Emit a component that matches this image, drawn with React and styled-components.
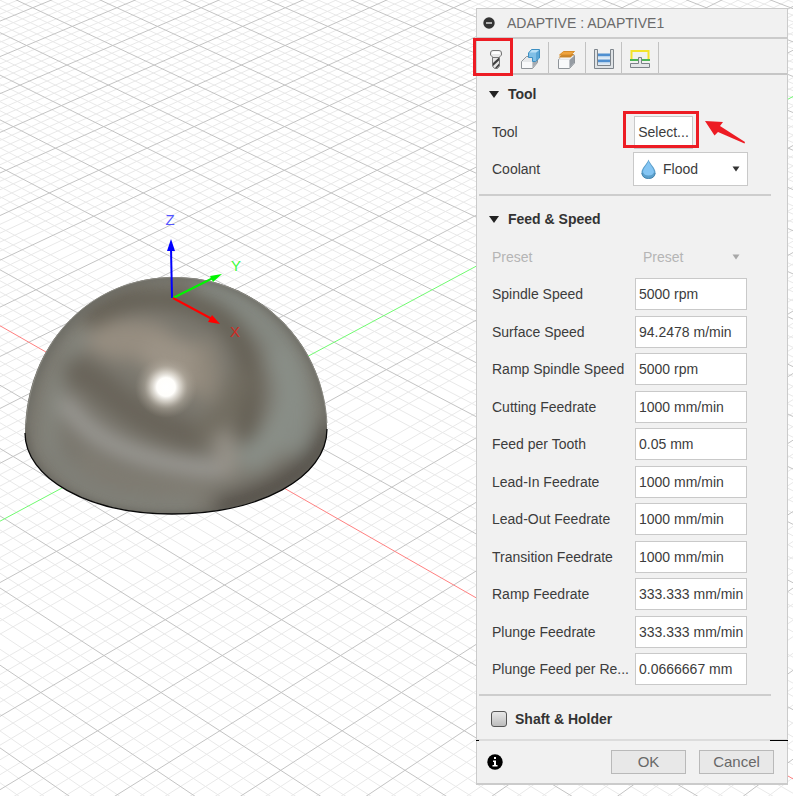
import React, { useState } from "react";
import styled, { createGlobalStyle, css } from "styled-components";

const GlobalStyle = createGlobalStyle`
  * { box-sizing: border-box; }
  body {
    margin: 0;
    background: #fff;
    color: #3c3c3c;
    font-family: "Liberation Sans", Arial, sans-serif;
    font-size: 14px;
  }
  button, input, select { font: inherit; color: inherit; }
`;

const Workspace = styled.main`
  display: grid;
  grid-template-columns: minmax(0, 1fr);
  min-height: 100vh;
  overflow: hidden;
`;

const Viewport = styled.section`
  grid-area: 1 / 1;
  display: grid;
  height: 0;
  min-height: 100%;
  overflow: hidden;
`;

const SceneSvg = styled.svg`
  display: block;
  width: 100%;
  height: 100%;
`;

const Panel = styled.form`
  grid-area: 1 / 1;
  justify-self: end;
  align-self: start;
  z-index: 1;
  width: 312px;
  margin: 8px 5px 11px 0;
  background: #f1f1f1;
  border: solid #cbcbcb;
  border-width: 1px 1px 2px 1px;
`;

const TitleBar = styled.header`
  display: flex;
  align-items: center;
  gap: 12px;
  height: 30px;
  padding: 0 6px;
  border-bottom: 2px solid #cbcbcb;
`;

const CollapseButton = styled.button`
  display: flex;
  padding: 0;
  border: 0;
  background: none;
`;

const Title = styled.h1`
  margin: 0;
  font-size: 14px;
  font-weight: 400;
  color: #6a6a6a;
`;

const TabBar = styled.div`
  display: flex;
  height: 36px;
  padding-top: 3px;
  border-bottom: 2px solid #c6c6c6;
`;

const annotated = css`
  position: relative;
  &::after {
    content: "";
    position: absolute;
    inset: ${(p) => p.$inset};
    border: 3px solid #ed1c24;
    pointer-events: none;
  }
`;

const Tab = styled.button`
  display: flex;
  align-items: center;
  justify-content: center;
  flex: 0 0 ${(p) => (p.$marked ? 36 : 37)}px;
  padding: ${(p) => (p.$marked ? "3px 0 0 2px" : "3px 0 0")};
  border: 0;
  border-right: 1px solid #c2c2c2;
  background: #f1f1f1;
  &:nth-child(even) { flex-basis: 36px; }
  ${(p) => p.$marked && annotated}
`;

const Group = styled.section`
  padding: ${(p) => (p.$first ? 0 : 4)}px 0 ${(p) => (p.$flush ? 0 : 6)}px;
`;

const Divider = styled.hr`
  height: 2px;
  margin: 0 16px 0 2px;
  border: 0;
  background: #cdcdcd;
`;

const GroupTitle = styled.h2`
  display: flex;
  align-items: center;
  gap: 9px;
  height: 38px;
  margin: 0;
  padding-left: 12px;
  font-size: 14px;
  font-weight: 700;
  color: #333;
`;

const Rows = styled.div`
  display: grid;
`;

const Row = styled.div`
  display: grid;
  grid-template-columns: 140px 1fr;
  align-items: center;
  height: 38px;
  padding-left: 15px;
  &:nth-child(even) {
    height: 37px;
    padding-bottom: 1px;
  }
`;

const Label = styled.label`
  white-space: nowrap;
  line-height: 18px;
  color: ${(p) => (p.$muted ? "#b5b5b5" : "#3c3c3c")};
`;

const Control = styled.div`
  display: flex;
  align-items: center;
  padding-left: ${(p) => (p.$wide ? 1 : 3)}px;
`;

const Field = styled.input`
  width: 112px;
  height: 32px;
  padding: 0 3px;
  border: 1px solid #c9c9c9;
  border-radius: 0;
  background: #fff;
  outline: none;
`;

const PickButton = styled.button`
  width: 59px;
  height: 33px;
  margin-left: -1px;
  padding: 0;
  border: 1px solid #c9c9c9;
  background: #fff;
  white-space: nowrap;
  ${annotated}
`;

const Pointer = styled.svg`
  margin-left: 11px;
`;

const SelectBox = styled.div`
  position: relative;
  display: flex;
  align-items: center;
  width: 115px;
  height: 34px;
`;

const SelectInput = styled.select`
  appearance: none;
  width: 100%;
  height: 100%;
  padding: 0 24px 0 ${(p) => (p.$plain ? 9 : 29)}px;
  border: 1px solid ${(p) => (p.$plain ? "transparent" : "#c9c9c9")};
  border-radius: 0;
  background: ${(p) => (p.$plain ? "transparent" : "#fff")};
  outline: none;
  &:disabled { color: #b5b5b5; opacity: 1; }
`;

const DropIcon = styled.svg`
  position: absolute;
  left: 8px;
  pointer-events: none;
`;

const Caret = styled.svg`
  position: absolute;
  right: 8px;
  fill: ${(p) => (p.$muted ? "#a8a8a8" : "#333")};
  pointer-events: none;
`;

const CheckLine = styled.div`
  display: flex;
  align-items: center;
  gap: 8px;
  height: 38px;
  padding-left: 14px;
  font-weight: 700;
  color: #333;
`;

const Checkbox = styled.input`
  appearance: none;
  width: 16px;
  height: 16px;
  margin: 0;
  border: 1px solid #555;
  border-radius: 3px;
  background: linear-gradient(#e8e8e8, #bcbcbc);
  &:checked { background: #666; }
`;

const FooterRule = styled.hr`
  height: 3px;
  margin: 0 -1px;
  border: 0;
  background:
    linear-gradient(#000, #000) left bottom / 3px 1px no-repeat,
    linear-gradient(#000, #000) right bottom / 18px 1px no-repeat,
    linear-gradient(transparent 1px, #dcdcdc 1px);
`;

const Footer = styled.footer`
  display: flex;
  align-items: center;
  gap: 13px;
  height: 42px;
  padding: 0 13px 0 10px;
`;

const InfoButton = styled.button`
  display: flex;
  margin-right: auto;
  padding: 0;
  border: 0;
  background: none;
`;

const ActionButton = styled.button`
  width: 75px;
  height: 24px;
  padding: 0;
  border: 1px solid #b9b9b9;
  background: #e8e8e8;
  font-size: 15px;
  line-height: 22px;
  color: #686868;
`;

/* Perspective ground plane: i and j are the cell coordinates of the two line families. */
const project = (i, j) => {
  const depth = 1 / (6.2473e-4 - 7.1996e-6 * (i + j));
  const y = depth - 1593;
  return [285.3 - 0.006 * (y - 7.7) + ((i - j) / 2) * 0.0526 * depth, y];
};

const gridPath = (accept) => {
  const parts = [];
  for (let k = -100; k <= 160; k += 1) {
    if (!accept(k)) continue;
    const c = k / 5;
    const lo = Math.max(-24, -8 - c);
    const hi = Math.min(36, 34 - c);
    if (hi <= lo) continue;
    const ends = [
      [project(c, lo), project(c, hi)],
      [project(lo, c), project(hi, c)],
    ];
    ends.forEach(([a, b]) => {
      parts.push(
        `M${a.map((v) => v.toFixed(1)).join(" ")}L${b.map((v) => v.toFixed(1)).join(" ")}`
      );
    });
  }
  return parts.join("");
};

const MINOR = gridPath((k) => k % 5 !== 0);
const MAJOR = gridPath((k) => k % 5 === 0 && k !== 40 && k !== 50);
const axisPath = (a, b) => `M${a.join(" ")}L${b.join(" ")}`;
const RED_AXIS = axisPath(project(-14, 10), project(22, 10));
const GREEN_AXIS = axisPath(project(8, -14), project(8, 22));

const DOME = "M25 433C25 345 90 277 174 277C262 277 327 347 327 429C327 478 259 514 172 514C88 514 25 478 25 433Z";

function Scene() {
  return (
    <SceneSvg viewBox="0 0 793 796" preserveAspectRatio="xMinYMin slice" role="img" aria-label="Model">
      <defs>
        <clipPath id="dome"><path d={DOME} /></clipPath>
        <filter id="soft" x="-50%" y="-50%" width="200%" height="200%" colorInterpolationFilters="sRGB">
          <feGaussianBlur stdDeviation="9" />
        </filter>
        <filter id="fine" x="-50%" y="-50%" width="200%" height="200%" colorInterpolationFilters="sRGB">
          <feGaussianBlur stdDeviation="4" />
        </filter>
        <radialGradient id="glint">
          <stop offset="0" stopColor="#fff" />
          <stop offset=".3" stopColor="#fffefb" />
          <stop offset=".5" stopColor="#e2ddd4" stopOpacity=".75" />
          <stop offset=".7" stopColor="#b9b2a6" stopOpacity=".45" />
          <stop offset="1" stopColor="#a39b8e" stopOpacity="0" />
        </radialGradient>
      </defs>
      <g fill="none">
        <path d={MINOR} stroke="#e9e9e9" />
        <path d={MAJOR} stroke="#c4c4c4" />
        <path d={RED_AXIS} stroke="#ff8080" />
        <path d={GREEN_AXIS} stroke="#70fa70" />
      </g>
      <g clipPath="url(#dome)">
        <path d={DOME} fill="#7b786f" />
        <g filter="url(#soft)" fill="none" strokeLinecap="round">
          <path d="M50 450C42 380 80 305 165 286" stroke="#868880" strokeWidth="14" />
          <path d="M205 286C270 308 312 375 298 445" stroke="#858982" strokeWidth="28" />
          <path d="M282 360C300 400 284 436 252 456" stroke="#898e87" strokeWidth="30" />
          <path d="M92 318C125 292 185 288 226 322C254 352 256 394 245 432" stroke="#645f54" strokeWidth="20" />
          <ellipse cx="130" cy="340" rx="44" ry="20" fill="#968d80" />
          <ellipse cx="180" cy="364" rx="42" ry="24" transform="rotate(22 180 364)" fill="#9c9386" />
          <path d="M205 350L208 392" stroke="#8f877a" strokeWidth="20" />
          <path d="M78 372C104 380 122 418 192 436" stroke="#69645a" strokeWidth="30" />
          <path d="M205 430C222 418 234 404 240 380" stroke="#726d61" strokeWidth="22" />
          <path d="M66 404C90 440 135 464 228 470" stroke="#a09f9b" strokeWidth="14" />
          <path d="M224 440L228 468" stroke="#98938a" strokeWidth="18" />
          <path d="M84 458C110 486 165 488 205 488" stroke="#827e74" strokeWidth="12" />
          <path d="M52 452C78 496 130 512 190 504" stroke="#83857e" strokeWidth="12" />
          <path d="M225 508C270 496 315 472 332 432" stroke="#544f48" strokeWidth="22" />
        </g>
        <g filter="url(#fine)" fill="none">
          <path d="M22 450C20 350 90 274 174 274C262 274 331 347 331 435" stroke="#6d6d66" strokeWidth="9" />
          <path d="M23 430C23 480 80 518 172 518C262 518 331 480 331 430" stroke="#605f58" strokeWidth="8" />
        </g>
      </g>
      <path d="M26 423C32 339 92 277.500 174 277.500C256 277.500 322 340 327 423" fill="none" stroke="#8a8982" />
      <path d="M25 433C25 478 88 514 172 514C259 514 327 478 327 429" fill="none" stroke="#080808" strokeWidth="1.300" />
      <circle cx="166" cy="387" r="31" fill="url(#glint)" />
      <g strokeWidth="2" fill="none">
        <path d="M172 298L171 248" stroke="#0000ff" />
        <path d="M173 298L213 278" stroke="#00f500" />
        <path d="M173 298L212 319" stroke="#ff0000" />
      </g>
      <path d="M171 239L175 251H167Z" fill="#0000ff" />
      <path d="M222 274L213 282L210 276Z" fill="#00f500" />
      <path d="M220 324L208 322L212 315Z" fill="#ff0000" />
      <g fontSize="15" textAnchor="middle">
        <text x="170" y="225" fill="#5555ff">Z</text>
        <text x="236" y="271" fill="#3dfa3d">Y</text>
        <text x="235" y="337" fill="#cf2c24">X</text>
      </g>
    </SceneSvg>
  );
}

const ToolIcon = () => (
  <svg width="22" height="22" viewBox="0 0 22 22">
    <path d="M7.500 8.500H14.500V18L12.500 20.500H9.500L7.500 18Z" fill="#e4e4e4" stroke="#777" />
    <path d="M8 15L14 9.500V12.500L8 18ZM10 20L14 15.500V18L12 20Z" fill="#3f3f3f" />
    <path d="M5.500 5Q5.500 2.500 8 2.500H14Q16.500 2.500 16.500 5V7L14 9.500H8L5.500 7Z" fill="#e9e9e9" stroke="#777" />
    <path d="M7 4.500Q7 3.500 9 3.500H13Q15 3.500 15 4.500V6H7Z" fill="#fff" />
  </svg>
);

const GeometryIcon = () => (
  <svg width="22" height="22" viewBox="0 0 22 22">
    <path d="M1.500 13.500L6.500 8.500H17.500V14.500L12.500 20.500H1.500Z" fill="#e6e8ea" stroke="#8f9499" />
    <path d="M2 14H12V20H2Z" fill="#f8f9fa" />
    <path d="M12.500 14L17 9V14.500L12.500 20Z" fill="#a5abb1" />
    <path d="M8.500 5L11.500 1.500H19.500V10L15.500 13.500H12.500V9.500H8.500Z" fill="#80bfe6" stroke="#3c8fc2" />
    <path d="M9.500 4.500L12 2H19L16 4.500Z" fill="#b9e0f6" />
    <path d="M16 5L19 2.500V9.500L16 12.500Z" fill="#5aa6d6" />
  </svg>
);

const HeightsIcon = () => (
  <svg width="22" height="22" viewBox="0 0 22 22">
    <path d="M2.500 11.500L7 7.500H18.500V15L13.500 20.500H2.500Z" fill="#e6e8ea" stroke="#8f9499" />
    <path d="M3 12H13V20H3Z" fill="#f8f9fa" />
    <path d="M13.500 12L18 8V15L13.500 20Z" fill="#969ca3" />
    <path d="M3 10.500L7 6.500H18.500L14 10.500Z" fill="#fff" />
    <path d="M2.500 9.500L6.500 6H18.500L14.500 9.500Z" fill="#c98428" />
    <path d="M3.500 7L7.500 3.500H18.500L14.500 7Z" fill="#f0a43e" stroke="#d88d2a" />
  </svg>
);

const PassesIcon = () => (
  <svg width="22" height="22" viewBox="0 0 22 22">
    <path d="M5 7H17M5 13H17" stroke="#4f8fd0" strokeWidth="3" />
    <path d="M5 9.500H17M5 15.500H17" stroke="#d3e5f6" strokeWidth="2" />
    <path d="M1.500 1.500H4.500V17.500H17.500V1.500H20.500V20.500H1.500Z" fill="#dfe3e6" stroke="#7e858c" />
  </svg>
);

const LinkingIcon = () => (
  <svg width="22" height="22" viewBox="0 0 22 22">
    <path d="M2.500 11V3H19.500V11" fill="none" stroke="#f4e32c" strokeWidth="2" />
    <path d="M1 12H21" stroke="#4cb656" strokeWidth="2" />
    <path d="M1.500 15.500H9.500V9.500H12.500V15.500H20.500V19.500H1.500Z" fill="#e3e6e8" stroke="#7b8288" />
  </svg>
);

const TABS = [
  ["Tool", ToolIcon],
  ["Geometry", GeometryIcon],
  ["Heights", HeightsIcon],
  ["Passes", PassesIcon],
  ["Linking", LinkingIcon],
];

const FEEDS = [
  ["Spindle Speed", "5000 rpm"],
  ["Surface Speed", "94.2478 m/min"],
  ["Ramp Spindle Speed", "5000 rpm"],
  ["Cutting Feedrate", "1000 mm/min"],
  ["Feed per Tooth", "0.05 mm"],
  ["Lead-In Feedrate", "1000 mm/min"],
  ["Lead-Out Feedrate", "1000 mm/min"],
  ["Transition Feedrate", "1000 mm/min"],
  ["Ramp Feedrate", "333.333 mm/min"],
  ["Plunge Feedrate", "333.333 mm/min"],
  ["Plunge Feed per Re...", "0.0666667 mm"],
];

const Disclosure = () => (
  <svg width="10" height="7" viewBox="0 0 10 7"><path d="M0 0H10L5 7Z" fill="#222" /></svg>
);

const CaretIcon = ({ muted }) => (
  <Caret $muted={muted} width="8" height="6" viewBox="0 0 8 6"><path d="M0.500 0.500H7.500L4 5.500Z" /></Caret>
);

function FeedRow({ label, initial }) {
  const [value, setValue] = useState(initial);
  const id = label.toLowerCase().replace(/[^a-z]+/g, "-");
  return (
    <Row>
      <Label htmlFor={id}>{label}</Label>
      <Control>
        <Field id={id} value={value} onChange={(e) => setValue(e.target.value)} />
      </Control>
    </Row>
  );
}

export default function App() {
  return (
    <>
      <GlobalStyle />
      <Workspace>
        <Viewport><Scene /></Viewport>
        <Panel onSubmit={(e) => e.preventDefault()}>
          <TitleBar>
            <CollapseButton type="button" aria-label="Collapse">
              <svg width="12" height="12" viewBox="0 0 12 12">
                <circle cx="6" cy="6" r="5.700" fill="#333" />
                <path d="M3 6H9" stroke="#ddd" strokeWidth="1.500" />
              </svg>
            </CollapseButton>
            <Title>ADAPTIVE : ADAPTIVE1</Title>
          </TitleBar>
          <TabBar role="tablist">
            {TABS.map(([name, Icon], index) => (
              <Tab
                key={name}
                type="button"
                role="tab"
                aria-label={name}
                aria-selected={index === 0}
                $marked={index === 0}
                $inset="-4px -1px -3px -4px"
              >
                <Icon />
              </Tab>
            ))}
          </TabBar>
          <Group $first>
            <GroupTitle><Disclosure />Tool</GroupTitle>
            <Rows>
              <Row>
                <Label htmlFor="tool">Tool</Label>
                <Control>
                  <PickButton id="tool" type="button" $inset="-6px -7px 0 -12px">Select...</PickButton>
                  <Pointer width="42" height="24" viewBox="0 0 42 24" aria-hidden="true">
                    <path d="M1 1L19 2L16 6L41 22L40.500 23.500L14 12L10.500 15.500Z" fill="#ed1c24" />
                  </Pointer>
                </Control>
              </Row>
              <Row>
                <Label htmlFor="coolant">Coolant</Label>
                <Control $wide>
                  <SelectBox>
                    <SelectInput id="coolant" defaultValue="Flood"><option>Flood</option></SelectInput>
                    <DropIcon width="15" height="20" viewBox="0 0 15 20">
                      <path d="M7.500 0.500C6 5 0.500 9 0.500 13.500Q1 19.500 7.500 19.500Q14 19.500 14.500 13.500C14.500 9 9 5 7.500 0.500Z" fill="#5b9fcb" />
                      <path d="M7.500 2C6 6 2 9.500 2 13Q3 16.500 7.500 16.500Q12 16.500 13 13C13 9.500 9 6 7.500 2Z" fill="#84c5f3" />
                      <path d="M0.800 14Q1.500 19.500 7.500 19.500Q13.500 19.500 14.200 14" fill="none" stroke="#4384ae" />
                    </DropIcon>
                    <CaretIcon />
                  </SelectBox>
                </Control>
              </Row>
            </Rows>
          </Group>
          <Divider />
          <Group>
            <GroupTitle><Disclosure />Feed &amp; Speed</GroupTitle>
            <Rows>
              <Row>
                <Label htmlFor="preset" $muted>Preset</Label>
                <Control $wide>
                  <SelectBox>
                    <SelectInput id="preset" disabled $plain><option>Preset</option></SelectInput>
                    <CaretIcon muted />
                  </SelectBox>
                </Control>
              </Row>
              {FEEDS.map(([label, value]) => <FeedRow key={label} label={label} initial={value} />)}
            </Rows>
          </Group>
          <Divider />
          <Group $flush>
            <CheckLine>
              <Checkbox id="shaft" type="checkbox" />
              <label htmlFor="shaft">Shaft &amp; Holder</label>
            </CheckLine>
          </Group>
          <FooterRule />
          <Footer>
            <InfoButton type="button" aria-label="Information">
              <svg width="16" height="16" viewBox="0 0 16 16">
                <circle cx="8" cy="8" r="7.700" fill="#000" />
                <path d="M7 3H9V5H7ZM6 6.500H9V11H10.500V12.500H5.500V11H7V8H6Z" fill="#fff" />
              </svg>
            </InfoButton>
            <ActionButton type="submit">OK</ActionButton>
            <ActionButton type="button">Cancel</ActionButton>
          </Footer>
        </Panel>
      </Workspace>
    </>
  );
}
